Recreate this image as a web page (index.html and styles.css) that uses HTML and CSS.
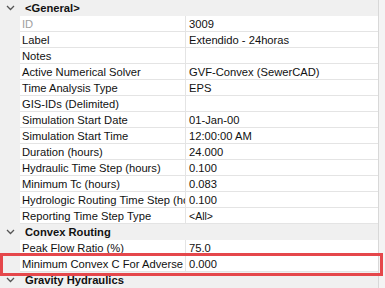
FILE: index.html
```html
<!DOCTYPE html>
<html lang="en">
<head>
  <meta charset="UTF-8" />
  <title>Properties</title>
  <link rel="stylesheet" href="styles.css">
</head>
<body>
  <div class="grid">
    <div class="row cat"><span class="chev"><svg width="9" height="6" viewBox="0 0 9 6"><path d="M1 1 L4.5 4.5 L8 1" fill="none" stroke="#555" stroke-width="1.3"/></svg></span><span class="name">&lt;General&gt;</span></div>
    <div class="row"><span class="gut"></span><span class="key dim">ID</span><span class="val">3009</span></div>
    <div class="row"><span class="gut"></span><span class="key">Label</span><span class="val">Extendido - 24horas</span></div>
    <div class="row"><span class="gut"></span><span class="key">Notes</span><span class="val"></span></div>
    <div class="row"><span class="gut"></span><span class="key">Active Numerical Solver</span><span class="val">GVF-Convex (SewerCAD)</span></div>
    <div class="row"><span class="gut"></span><span class="key">Time Analysis Type</span><span class="val">EPS</span></div>
    <div class="row"><span class="gut"></span><span class="key">GIS-IDs (Delimited)</span><span class="val"></span></div>
    <div class="row"><span class="gut"></span><span class="key">Simulation Start Date</span><span class="val">01-Jan-00</span></div>
    <div class="row"><span class="gut"></span><span class="key">Simulation Start Time</span><span class="val">12:00:00 AM</span></div>
    <div class="row"><span class="gut"></span><span class="key">Duration (hours)</span><span class="val">24.000</span></div>
    <div class="row"><span class="gut"></span><span class="key">Hydraulic Time Step (hours)</span><span class="val">0.100</span></div>
    <div class="row"><span class="gut"></span><span class="key">Minimum Tc (hours)</span><span class="val">0.083</span></div>
    <div class="row"><span class="gut"></span><span class="key">Hydrologic Routing Time Step (hours)</span><span class="val">0.100</span></div>
    <div class="row"><span class="gut"></span><span class="key">Reporting Time Step Type</span><span class="val small">&lt;All&gt;</span></div>
    <div class="row cat"><span class="chev"><svg width="9" height="6" viewBox="0 0 9 6"><path d="M1 1 L4.5 4.5 L8 1" fill="none" stroke="#555" stroke-width="1.3"/></svg></span><span class="name">Convex Routing</span></div>
    <div class="row"><span class="gut"></span><span class="key">Peak Flow Ratio (%)</span><span class="val">75.0</span></div>
    <div class="row marked"><span class="gut"></span><span class="key">Minimum Convex C For Adverse</span><span class="val">0.000</span></div>
    <div class="row cat"><span class="chev"><svg width="9" height="6" viewBox="0 0 9 6"><path d="M1 1 L4.5 4.5 L8 1" fill="none" stroke="#555" stroke-width="1.3"/></svg></span><span class="name">Gravity Hydraulics</span></div>
  </div>
</body>
</html>
```

FILE: styles.css
```css
* {
  margin: 0;
  padding: 0;
  box-sizing: border-box;
}
body {
  background: #f4f4f4;
  font-family: "Liberation Sans", Arial, sans-serif;
  font-size: 11.2px;
  color: #111;
  overflow: hidden;
}
.grid {
  width: 379px;
  background: #fff;
  border-right: 1px solid #d8d8d8;
}
.row {
  display: flex;
  height: 16px;
  line-height: 17px;
  white-space: nowrap;
}
.gut {
  width: 20px;
  flex: none;
  background: #f0f0f0;
}
.key {
  width: 166px;
  flex: none;
  padding-left: 2px;
  overflow: hidden;
  border-right: 1px solid #e4e4e4;
  border-bottom: 1px solid #e4e4e4;
}
.val {
  flex: 1;
  padding-left: 3px;
  border-bottom: 1px solid #e4e4e4;
}
.dim {
  color: #a0a0a0;
}
.small {
  font-size: 10.5px;
}
.cat {
  background: #f0f0f0;
  font-weight: bold;
}
.chev {
  width: 25px;
  flex: none;
  display: flex;
  align-items: center;
  padding-left: 6px;
}
.marked {
  position: relative;
}
.marked::after {
  content: "";
  position: absolute;
  left: 0;
  top: -3px;
  width: 383px;
  height: 23px;
  box-sizing: border-box;
  border: 3px solid #e5474b;
}
```
